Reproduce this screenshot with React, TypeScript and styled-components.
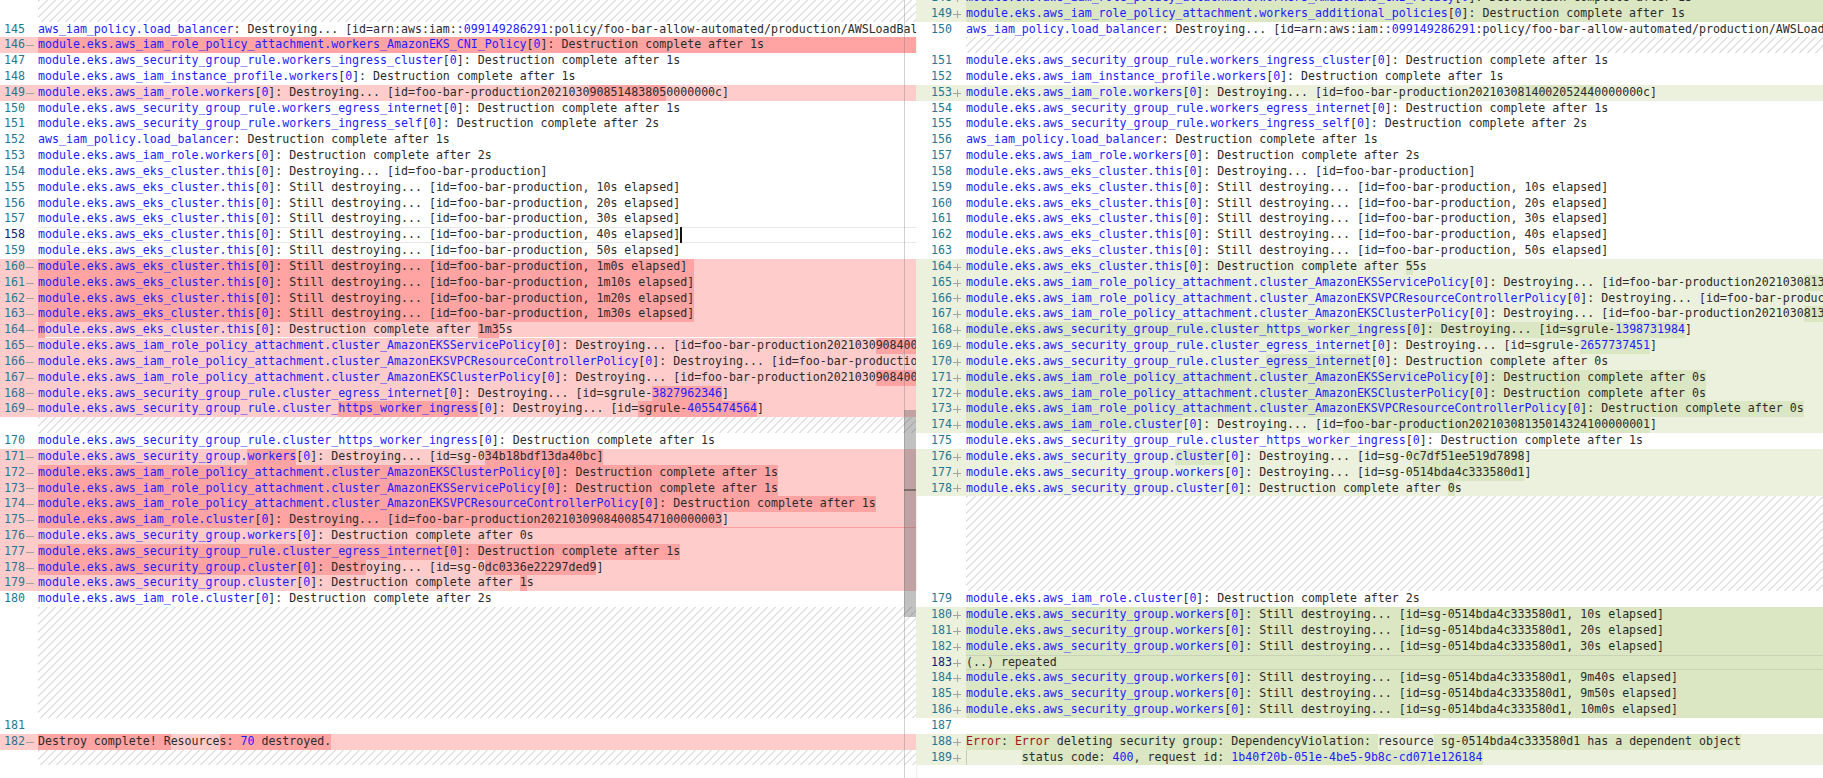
import React from "react";
import styled, { createGlobalStyle, css } from "styled-components";

const ROW = 15.83;

type Side = "left" | "right";
type Range = [number, number];
type Line = {
  n?: number;
  text?: string;
  hatch?: number;
  changed?: boolean;
  full?: boolean;
  hl?: Range[];
  current?: boolean;
  caret?: number;
  edge?: string;
  guide?: boolean;
};

const palette = {
  left: { light: "#ffcccc", dark: "#ffa3a3" },
  right: { light: "#ebf1dd", dark: "#dbe6c2" },
};

const Global = createGlobalStyle`
  html, body { margin: 0; padding: 0; background: #fff; overflow: hidden; }
`;

const Editor = styled.div`
  display: flex;
  width: 100vw;
  height: 100vh;
  overflow: hidden;
  background: #fff;
  font-family: "DejaVu Sans Mono", "Liberation Mono", monospace;
  font-size: 11.6px;
  line-height: ${ROW}px;
  color: #2b2b2b;
`;

const Pane = styled.section<{ $side: Side }>`
  position: relative;
  overflow: hidden;
  height: 100%;
  ${(p) =>
    p.$side === "left"
      ? css`
          flex: 0 0 916px;
        `
      : css`
          flex: 1 1 0;
          min-width: 0;
          box-shadow: inset 3px 0 3px -3px #d8d8d8;
        `}
`;

const Lines = styled.div<{ $offset: number }>`
  margin-top: ${(p) => p.$offset}px;
`;

const Hatch = styled.div<{ $side: Side; $height: number }>`
  height: ${(p) => p.$height}px;
  margin-left: ${(p) => (p.$side === "left" ? 38 : 50)}px;
  background-image: repeating-linear-gradient(
    135deg,
    #e2e2e2 0,
    #e2e2e2 1.6px,
    #fff 1.6px,
    #fff 5.66px
  );
`;

const RowBox = styled.div`
  display: flex;
  height: ${ROW}px;
`;

const Gutter = styled.div<{ $side: Side; $changed?: boolean; $current?: boolean }>`
  flex: 0 0 ${(p) => (p.$side === "left" ? 38 : 50)}px;
  display: flex;
  align-items: center;
  background: ${(p) => (p.$changed ? palette[p.$side].light : "#fff")};
  color: ${(p) => (p.$current ? "#0b216f" : "#237893")};
`;

const LineNo = styled.span<{ $side: Side }>`
  flex: 0 0 ${(p) => (p.$side === "left" ? 25 : 36)}px;
  text-align: right;
`;

const SignIcon = styled.svg`
  flex: none;
  margin-left: 1px;
  width: 8px;
  height: 8px;
  stroke: #a3a3a3;
  stroke-width: 1;
  fill: none;
`;

const Code = styled.div<{
  $side: Side;
  $changed?: boolean;
  $full?: boolean;
  $current?: boolean;
  $edge?: string;
  $guide?: boolean;
}>`
  position: relative;
  flex: 1 1 0;
  min-width: 0;
  overflow: hidden;
  white-space: pre;
  background: ${(p) =>
    p.$full ? palette[p.$side].dark : p.$changed ? palette[p.$side].light : "#fff"};
  box-shadow: ${(p) => (p.$edge ? `inset 0 -1px 0 ${p.$edge}` : p.$guide ? "inset 1px 0 0 #c6ccb6" : "none")};
  ${(p) =>
    p.$current &&
    css`
      &::after {
        content: "";
        position: absolute;
        inset: 0;
        border-top: 1px solid rgba(120, 120, 120, 0.17);
        border-bottom: 1px solid rgba(120, 120, 120, 0.17);
      }
    `}
`;

const Run = styled.span<{ $side: Side; $hl: boolean; $tone: string }>`
  display: inline-block;
  height: 100%;
  vertical-align: top;
  background: ${(p) => (p.$hl ? palette[p.$side].dark : "transparent")};
  color: ${(p) => (p.$tone === "blue" ? "#1c1cff" : p.$tone === "red" ? "#a31515" : "#2b2b2b")};
`;

const Caret = styled.span`
  display: inline-block;
  width: 1.5px;
  margin-right: -1.5px;
  height: 100%;
  vertical-align: top;
  background: #111;
`;

const Track = styled.div`
  position: absolute;
  top: 0;
  bottom: 0;
  right: 0;
  width: 12px;
  box-shadow: inset 1px 0 0 rgba(120, 120, 120, 0.35);
`;

const Slider = styled.div`
  position: absolute;
  top: 410px;
  left: 0;
  right: 0;
  height: 207px;
  background: rgba(100, 100, 100, 0.4);
`;

const Tick = styled.div`
  position: absolute;
  top: 489px;
  left: 0;
  right: 0;
  height: 2px;
  background: rgba(70, 70, 70, 0.55);
`;

const BLUE =
  /^(?:module|aws_iam_policy)\.[\w.]+|(?<=\[)0(?=\])|(?<=sgrule-)\d+|(?<=iam::)\d+|\b70\b|\b400\b|[0-9a-f]{8}-[0-9a-f]{4}-[0-9a-f]{4}-[0-9a-f]{4}-[0-9a-f]{12}/g;
const RED = /\bError\b/g;

function segments(text: string, hl: Range[] = []) {
  const tones: string[] = new Array(text.length).fill("base");
  for (const m of text.matchAll(BLUE)) {
    for (let i = 0; i < m[0].length; i++) tones[(m.index ?? 0) + i] = "blue";
  }
  for (const m of text.matchAll(RED)) {
    for (let i = 0; i < m[0].length; i++) tones[(m.index ?? 0) + i] = "red";
  }
  const padded = hl.reduce((len, [, e]) => Math.max(len, e), text.length);
  const out: { text: string; hl: boolean; tone: string }[] = [];
  for (let i = 0; i < padded; i++) {
    const on = hl.some(([s, e]) => i >= s && i < e);
    const tone = tones[i] ?? "base";
    const ch = text[i] ?? " ";
    const last = out[out.length - 1];
    if (last && last.hl === on && last.tone === tone) last.text += ch;
    else out.push({ text: ch, hl: on, tone });
  }
  return out;
}

function Sign({ side }: { side: Side }) {
  return (
    <SignIcon viewBox="0 0 8 8">
      <path d="M0 4.5H8" />
      {side === "right" && <path d="M4.5 0.5V8" />}
    </SignIcon>
  );
}

function Row({ line, side }: { line: Line; side: Side }) {
  const parts = segments(line.text ?? "", line.hl);
  let pos = 0;
  return (
    <RowBox>
      <Gutter $side={side} $changed={line.changed} $current={line.current}>
        <LineNo $side={side}>{line.n}</LineNo>
        {line.changed && <Sign side={side} />}
      </Gutter>
      <Code
        $side={side}
        $changed={line.changed}
        $full={line.full}
        $current={line.current}
        $edge={line.edge}
        $guide={line.guide}
      >
        {parts.map((s, i) => {
          const start = pos;
          pos += s.text.length;
          return (
            <React.Fragment key={i}>
              {line.caret !== undefined && line.caret === start && <Caret />}
              <Run $side={side} $hl={s.hl} $tone={s.tone}>
                {s.text}
              </Run>
            </React.Fragment>
          );
        })}
        {line.caret !== undefined && line.caret >= pos && <Caret />}
      </Code>
    </RowBox>
  );
}

const M = "module.eks.";
const ATT = M + "aws_iam_role_policy_attachment.";
const SGR = M + "aws_security_group_rule.";
const SG = M + "aws_security_group.";
const EKS = M + "aws_eks_cluster.this[0]: ";
const DONE = "Destruction complete after ";
const STILL = "Still destroying... ";
const FOO = "[id=foo-bar-production";

const leftLines: Line[] = [
  { hatch: 21.5 },
  { n: 145, text: "aws_iam_policy.load_balancer: Destroying... [id=arn:aws:iam::099149286291:policy/foo-bar-allow-automated/production/AWSLoadBalancerControllerIAMPolicy]" },
  { n: 146, changed: true, full: true, text: ATT + "workers_AmazonEKS_CNI_Policy[0]: " + DONE + "1s" },
  { n: 147, text: SGR + "workers_ingress_cluster[0]: " + DONE + "1s" },
  { n: 148, text: M + "aws_iam_instance_profile.workers[0]: " + DONE + "1s" },
  { n: 149, changed: true, hl: [[79, 90]], text: M + "aws_iam_role.workers[0]: Destroying... " + FOO + "2021030908514838050000000c]" },
  { n: 150, text: SGR + "workers_egress_internet[0]: " + DONE + "1s" },
  { n: 151, text: SGR + "workers_ingress_self[0]: " + DONE + "2s" },
  { n: 152, text: "aws_iam_policy.load_balancer: " + DONE + "1s" },
  { n: 153, text: M + "aws_iam_role.workers[0]: " + DONE + "2s" },
  { n: 154, text: EKS + "Destroying... " + FOO + "]" },
  { n: 155, text: EKS + STILL + FOO + ", 10s elapsed]" },
  { n: 156, text: EKS + STILL + FOO + ", 20s elapsed]" },
  { n: 157, text: EKS + STILL + FOO + ", 30s elapsed]" },
  { n: 158, current: true, caret: 92, text: EKS + STILL + FOO + ", 40s elapsed]" },
  { n: 159, text: EKS + STILL + FOO + ", 50s elapsed]" },
  { n: 160, changed: true, hl: [[0, 94]], text: EKS + STILL + FOO + ", 1m0s elapsed]" },
  { n: 161, changed: true, hl: [[0, 94]], text: EKS + STILL + FOO + ", 1m10s elapsed]" },
  { n: 162, changed: true, hl: [[0, 94]], text: EKS + STILL + FOO + ", 1m20s elapsed]" },
  { n: 163, changed: true, hl: [[0, 94]], text: EKS + STILL + FOO + ", 1m30s elapsed]" },
  { n: 164, changed: true, hl: [[0, 1], [63, 66]], edge: "#fff", text: EKS + DONE + "1m35s" },
  { n: 165, changed: true, hl: [[120, 131]], text: ATT + "cluster_AmazonEKSServicePolicy[0]: Destroying... " + FOO + "20210309084008547000000002]" },
  { n: 166, changed: true, text: ATT + "cluster_AmazonEKSVPCResourceControllerPolicy[0]: Destroying... " + FOO + "20210309084008547000000001]" },
  { n: 167, changed: true, hl: [[120, 131]], text: ATT + "cluster_AmazonEKSClusterPolicy[0]: Destroying... " + FOO + "20210309084008547200000004]" },
  { n: 168, changed: true, hl: [[88, 98]], text: SGR + "cluster_egress_internet[0]: Destroying... [id=sgrule-3827962346]" },
  { n: 169, changed: true, hl: [[43, 63], [86, 103]], text: SGR + "cluster_https_worker_ingress[0]: Destroying... [id=sgrule-4055474564]" },
  { hatch: ROW },
  { n: 170, text: SGR + "cluster_https_worker_ingress[0]: " + DONE + "1s" },
  { n: 171, changed: true, hl: [[30, 37], [64, 81]], text: SG + "workers[0]: Destroying... [id=sg-034b18bdf13da40bc]" },
  { n: 172, changed: true, hl: [[0, 106]], text: ATT + "cluster_AmazonEKSClusterPolicy[0]: " + DONE + "1s" },
  { n: 173, changed: true, hl: [[0, 106]], text: ATT + "cluster_AmazonEKSServicePolicy[0]: " + DONE + "1s" },
  { n: 174, changed: true, hl: [[0, 120]], text: ATT + "cluster_AmazonEKSVPCResourceControllerPolicy[0]: " + DONE + "1s" },
  { n: 175, changed: true, hl: [[0, 98]], edge: "#ff9c9c", text: M + "aws_iam_role.cluster[0]: Destroying... " + FOO + "20210309084008547100000003]" },
  { n: 176, changed: true, text: SG + "workers[0]: " + DONE + "0s" },
  { n: 177, changed: true, hl: [[0, 92]], text: SGR + "cluster_egress_internet[0]: " + DONE + "1s" },
  { n: 178, changed: true, hl: [[0, 47], [64, 80]], text: SG + "cluster[0]: Destroying... [id=sg-0dc0336e22297ded9]" },
  { n: 179, changed: true, hl: [[69, 70]], text: SG + "cluster[0]: " + DONE + "1s" },
  { n: 180, text: M + "aws_iam_role.cluster[0]: " + DONE + "2s" },
  { hatch: ROW * 7 },
  { n: 181, text: "" },
  { n: 182, changed: true, hl: [[0, 19], [26, 42]], text: "Destroy complete! Resources: 70 destroyed." },
  { hatch: ROW },
];

const W = SG + "workers[0]: ";
const SGID = "[id=sg-0514bda4c333580d1";

const rightLines: Line[] = [
  { n: 148, changed: true, full: true, text: ATT + "workers_AmazonEKS_CNI_Policy[0]: " + DONE + "1s" },
  { n: 149, changed: true, full: true, text: ATT + "workers_additional_policies[0]: " + DONE + "1s" },
  { n: 150, text: "aws_iam_policy.load_balancer: Destroying... [id=arn:aws:iam::099149286291:policy/foo-bar-allow-automated/production/AWSLoadBalancerControllerIAMPolicy]" },
  { hatch: ROW },
  { n: 151, text: SGR + "workers_ingress_cluster[0]: " + DONE + "1s" },
  { n: 152, text: M + "aws_iam_instance_profile.workers[0]: " + DONE + "1s" },
  { n: 153, changed: true, hl: [[79, 90]], text: M + "aws_iam_role.workers[0]: Destroying... " + FOO + "2021030814002052440000000c]" },
  { n: 154, text: SGR + "workers_egress_internet[0]: " + DONE + "1s" },
  { n: 155, text: SGR + "workers_ingress_self[0]: " + DONE + "2s" },
  { n: 156, text: "aws_iam_policy.load_balancer: " + DONE + "1s" },
  { n: 157, text: M + "aws_iam_role.workers[0]: " + DONE + "2s" },
  { n: 158, text: EKS + "Destroying... " + FOO + "]" },
  { n: 159, text: EKS + STILL + FOO + ", 10s elapsed]" },
  { n: 160, text: EKS + STILL + FOO + ", 20s elapsed]" },
  { n: 161, text: EKS + STILL + FOO + ", 30s elapsed]" },
  { n: 162, text: EKS + STILL + FOO + ", 40s elapsed]" },
  { n: 163, text: EKS + STILL + FOO + ", 50s elapsed]" },
  { n: 164, changed: true, hl: [[63, 64]], text: EKS + DONE + "55s" },
  { n: 165, changed: true, hl: [[120, 131]], text: ATT + "cluster_AmazonEKSServicePolicy[0]: Destroying... " + FOO + "20210308135014323800000002]" },
  { n: 166, changed: true, text: ATT + "cluster_AmazonEKSVPCResourceControllerPolicy[0]: Destroying... " + FOO + "20210308135014323800000001]" },
  { n: 167, changed: true, hl: [[120, 131]], text: ATT + "cluster_AmazonEKSClusterPolicy[0]: Destroying... " + FOO + "20210308135014324000000003]" },
  { n: 168, changed: true, hl: [[0, 103]], text: SGR + "cluster_https_worker_ingress[0]: Destroying... [id=sgrule-1398731984]" },
  { n: 169, changed: true, hl: [[88, 98]], text: SGR + "cluster_egress_internet[0]: Destroying... [id=sgrule-2657737451]" },
  { n: 170, changed: true, hl: [[43, 58]], text: SGR + "cluster_egress_internet[0]: " + DONE + "0s" },
  { n: 171, changed: true, hl: [[0, 106]], text: ATT + "cluster_AmazonEKSServicePolicy[0]: " + DONE + "0s" },
  { n: 172, changed: true, hl: [[0, 106]], text: ATT + "cluster_AmazonEKSClusterPolicy[0]: " + DONE + "0s" },
  { n: 173, changed: true, hl: [[0, 120]], text: ATT + "cluster_AmazonEKSVPCResourceControllerPolicy[0]: " + DONE + "0s" },
  { n: 174, changed: true, hl: [[0, 31], [54, 98]], text: M + "aws_iam_role.cluster[0]: Destroying... " + FOO + "20210308135014324100000001]" },
  { n: 175, text: SGR + "cluster_https_worker_ingress[0]: " + DONE + "1s" },
  { n: 176, changed: true, hl: [[30, 37], [64, 80]], text: SG + "cluster[0]: Destroying... [id=sg-0c7df51ee519d7898]" },
  { n: 177, changed: true, hl: [[64, 80]], text: W + "Destroying... " + SGID + "]" },
  { n: 178, changed: true, hl: [[69, 70]], text: SG + "cluster[0]: " + DONE + "0s" },
  { hatch: ROW * 6 },
  { n: 179, text: M + "aws_iam_role.cluster[0]: " + DONE + "2s" },
  { n: 180, changed: true, full: true, text: W + STILL + SGID + ", 10s elapsed]" },
  { n: 181, changed: true, full: true, text: W + STILL + SGID + ", 20s elapsed]" },
  { n: 182, changed: true, full: true, text: W + STILL + SGID + ", 30s elapsed]" },
  { n: 183, changed: true, full: true, current: true, text: "(..) repeated" },
  { n: 184, changed: true, full: true, text: W + STILL + SGID + ", 9m40s elapsed]" },
  { n: 185, changed: true, full: true, text: W + STILL + SGID + ", 9m50s elapsed]" },
  { n: 186, changed: true, full: true, text: W + STILL + SGID + ", 10m0s elapsed]" },
  { n: 187, text: "" },
  { n: 188, changed: true, hl: [[0, 59], [67, 111]], text: "Error: Error deleting security group: DependencyViolation: resource sg-0514bda4c333580d1 has a dependent object" },
  { n: 189, changed: true, guide: true, hl: [[8, 74]], text: "        status code: 400, request id: 1b40f20b-051e-4be5-9b8c-cd071e126184" },
];

function Column({ side, lines, offset }: { side: Side; lines: Line[]; offset: number }) {
  return (
    <Lines $offset={offset}>
      {lines.map((line, i) =>
        line.hatch !== undefined ? (
          <Hatch key={i} $side={side} $height={line.hatch} />
        ) : (
          <Row key={i} line={line} side={side} />
        )
      )}
    </Lines>
  );
}

export default function App() {
  return (
    <>
      <Global />
      <Editor>
        <Pane $side="left">
          <Column side="left" lines={leftLines} offset={0} />
          <Track>
            <Slider />
            <Tick />
          </Track>
        </Pane>
        <Pane $side="right">
          <Column side="right" lines={rightLines} offset={-10.16} />
        </Pane>
      </Editor>
    </>
  );
}
